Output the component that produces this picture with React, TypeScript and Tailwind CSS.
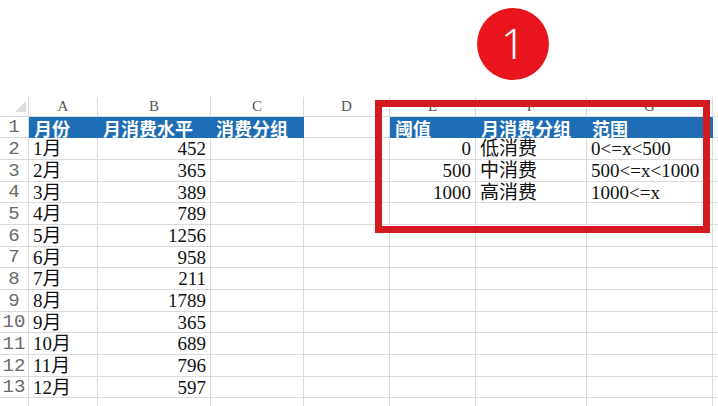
import React from 'react'

const COLS = ['A', 'B', 'C', 'D', 'E', 'F', 'G']
const MONTHS: [string, number][] = [
  ['1月', 452], ['2月', 365], ['3月', 389], ['4月', 789], ['5月', 1256], ['6月', 958],
  ['7月', 211], ['8月', 1789], ['9月', 365], ['10月', 689], ['11月', 796], ['12月', 597],
]
const GROUPS: [number, string, string][] = [
  [0, '低消费', '0<=x<500'],
  [500, '中消费', '500<=x<1000'],
  [1000, '高消费', '1000<=x'],
]

const cell = 'border-r border-b border-[#dadada] flex items-center whitespace-nowrap leading-[20px]'
const head = 'bg-[#1f6db5] text-white font-bold text-[18px] leading-[20px] font-["Noto_Sans_CJK_SC",sans-serif] flex items-center pl-[5px] whitespace-nowrap'
const data = 'font-["Liberation_Serif","Noto_Sans_CJK_SC",serif] text-[19px] text-[#111] pt-[1px]'

export default function App() {
  return (
    <div className="w-[718px] h-[406px] bg-white relative overflow-hidden">
      {/* step badge */}
      <div className="h-[97px] pl-[477px] pt-[8px]">
        <div className="w-[72px] h-[72px] rounded-full bg-[#e8161c] flex items-center justify-center text-white text-[42px] leading-none font-['Noto_Sans',sans-serif] font-light pb-[2px]">
          1
        </div>
      </div>

      <div className="grid grid-cols-[29px_69px_113px_93px_86px_86px_111px_126px_5px] grid-rows-[20px_21px_22px_22px_21px_22px_22px_21px_22px_22px_21px_22px_22px_21px_8px]">
        {/* column letters */}
        <div className="border-r border-b border-[#dadada] flex items-end justify-end pr-[2px] pb-[4px]">
          <svg width="11" height="11" viewBox="0 0 11 11"><polygon points="11,0 11,11 0,11" fill="#dcdcdc" /></svg>
        </div>
        {COLS.map(c => (
          <div key={c} className="border-r border-b border-[#dadada] flex items-center justify-center font-['Liberation_Serif',serif] text-[15px] leading-none text-[#555]">
            {c}
          </div>
        ))}
        <div className="border-b border-[#dadada]" />

        {Array.from({ length: 13 }).map((_, i) => {
          const r = i + 1
          const num = (
            <div className={`${cell} justify-center font-['Liberation_Mono',monospace] text-[19px] text-[#6a6a6a]`}>
              {r}
            </div>
          )
          if (r === 1) {
            return (
              <React.Fragment key={r}>
                {num}
                <div className={head}>月份</div>
                <div className={head}>月消费水平</div>
                <div className={head}>消费分组</div>
                <div className={cell} />
                <div className={head}>阈值</div>
                <div className={head}>月消费分组</div>
                <div className={head}>范围</div>
                <div className="border-b border-[#dadada]" />
              </React.Fragment>
            )
          }
          const m = MONTHS[r - 2]
          const g = GROUPS[r - 2]
          return (
            <React.Fragment key={r}>
              {num}
              <div className={`${cell} ${data} pl-[4px]`}>{m[0]}</div>
              <div className={`${cell} ${data} justify-end pr-[4px]`}>{m[1]}</div>
              <div className={cell} />
              <div className={cell} />
              <div className={`${cell} ${data} justify-end pr-[4px]`}>{g ? g[0] : ''}</div>
              <div className={`${cell} ${data} pl-[4px]`}>{g ? g[1] : ''}</div>
              <div className={`${cell} ${data} pl-[4px] text-[18px]`}>{g ? g[2] : ''}</div>
              <div className="border-b border-[#dadada]" />
            </React.Fragment>
          )
        })}

        {/* strip below row 13 */}
        {Array.from({ length: 8 }).map((_, i) => (
          <div key={`b${i}`} className="border-r border-[#dadada]" />
        ))}
        <div />
      </div>

      {/* highlight frame */}
      <div className="absolute left-[375px] top-[100px] w-[335px] h-[133px] border-[7px] border-[#d31a20]" />
    </div>
  )
}
